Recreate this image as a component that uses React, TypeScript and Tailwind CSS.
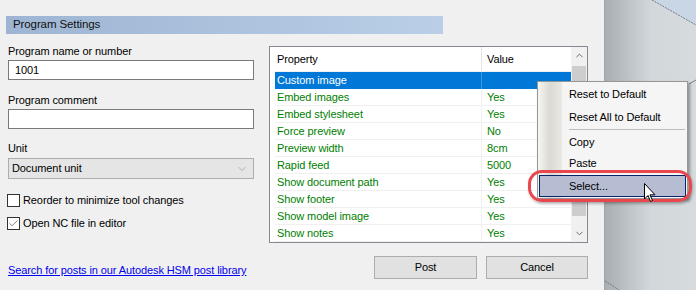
import { Check, ChevronDown, ChevronUp } from "lucide-react";

const font = { fontFamily: '"Liberation Sans", Arial, sans-serif' };

const rows = [
    { name: "Custom image", value: "" },
    { name: "Embed images", value: "Yes" },
    { name: "Embed stylesheet", value: "Yes" },
    { name: "Force preview", value: "No" },
    { name: "Preview width", value: "8cm" },
    { name: "Rapid feed", value: "5000" },
    { name: "Show document path", value: "Yes" },
    { name: "Show footer", value: "Yes" },
    { name: "Show model image", value: "Yes" },
    { name: "Show notes", value: "Yes" },
];

function Label({ text, className }: { text: string; className: string }) {
    return <div className={`h-[15px] leading-[15px] text-[#000] ${className}`}>{text}</div>;
}

export default function App() {
    return (
        <div
            style={font}
            className="relative flex h-[290px] w-[696px] overflow-hidden text-[11px] tracking-[-0.1px] text-black"
        >
            {/* ── Dialog ── */}
            <div className="h-full w-[605px] shrink-0 border-r border-[#a2a4a6] bg-[#f0f0f0] pl-[6px] pt-[16px]">
                {/* Section band */}
                <div className="flex h-[18px] w-[437px] items-center bg-gradient-to-r from-[#9db5d3] to-[#bacfe7] pl-[7px] text-[11.5px] text-[#111]">
                    Program Settings
                </div>

                <div className="flex">
                    {/* Left column */}
                    <div className="ml-[2px] flex w-[246px] flex-col">
                        <Label text="Program name or number" className="mt-[10px]" />
                        <div className="mt-[1px] flex h-[20px] items-center border border-[#7a7a7a] bg-white pl-[6px]">
                            1001
                        </div>

                        <Label text="Program comment" className="mt-[13px]" />
                        <div className="mt-[1px] h-[20px] border border-[#7a7a7a] bg-white" />

                        <Label text="Unit" className="mt-[12px]" />
                        <div className="mt-[2px] flex h-[21px] items-center justify-between border border-[#adadad] bg-[#e5e5e5] pl-[3px] pr-[5px] text-black">
                            <span>Document unit</span>
                            <ChevronDown className="h-[12px] w-[12px] text-[#8a8a8a]" strokeWidth={1.2} />
                        </div>

                        <div className="mt-[15px] flex h-[13px] items-center">
                            <div className="h-[13px] w-[13px] -ml-[1px] border border-[#333] bg-white" />
                            <span className="ml-[3px]">Reorder to minimize tool changes</span>
                        </div>
                        <div className="mt-[10px] flex h-[13px] items-center">
                            <div className="flex h-[13px] w-[13px] -ml-[1px] items-center justify-center border border-[#333] bg-white">
                                <Check className="h-[11px] w-[11px] text-[#555]" strokeWidth={1.6} />
                            </div>
                            <span className="ml-[3px]">Open NC file in editor</span>
                        </div>

                        <a className="mt-[33px] h-[15px] leading-[15px] text-[#0000ee] underline">
                            Search for posts in our Autodesk HSM post library
                        </a>
                    </div>

                    {/* Right column: property grid */}
                    <div className="ml-[15px] mt-[12px] flex w-[319px] flex-col">
                        <div className="flex h-[197px] border border-[#828790] bg-white">
                            <div className="flex flex-1 flex-col pl-[5px]">
                                <div className="flex h-[25px] border-b border-[#f0f0f0]">
                                    <div className="flex w-[206px] items-center pl-[2px]">Property</div>
                                    <div className="w-px bg-[#e5e5e5]" />
                                    <div className="flex flex-1 items-center pl-[5px]">Value</div>
                                </div>
                                {rows.map((r, i) => {
                                    const sel = i === 0;
                                    return (
                                        <div
                                            key={r.name}
                                            className={`flex h-[17px] ${sel ? "bg-[#0078d7] text-white" : "border-b border-[#f0f0f0] text-[#008000]"}`}
                                        >
                                            <div className="flex w-[206px] items-center pl-[2px]">{r.name}</div>
                                            <div className={`w-px ${sel ? "bg-[#3d97df]" : "bg-[#f0f0f0]"}`} />
                                            <div className="flex flex-1 items-center pl-[5px]">{r.value}</div>
                                        </div>
                                    );
                                })}
                            </div>
                            {/* Scrollbar */}
                            <div className="flex w-[16px] flex-col items-center bg-[#f0f0f0]">
                                <div className="flex h-[17px] items-center justify-center">
                                    <ChevronUp className="h-[11px] w-[11px] text-[#606060]" strokeWidth={2} />
                                </div>
                                <div className="mt-[2px] h-[150px] w-[14px] bg-[#cdcdcd]" />
                                <div className="flex-1" />
                                <div className="flex h-[17px] items-center justify-center">
                                    <ChevronDown className="h-[11px] w-[11px] text-[#606060]" strokeWidth={2} />
                                </div>
                            </div>
                        </div>

                        <div className="mt-[13px] flex justify-end gap-[9px]">
                            <div className="flex h-[23px] w-[103px] items-center justify-center border border-[#adadad] bg-[#e1e1e1]">
                                Post
                            </div>
                            <div className="flex h-[23px] w-[102px] items-center justify-center border border-[#adadad] bg-[#e1e1e1]">
                                Cancel
                            </div>
                        </div>
                    </div>
                </div>
            </div>

            {/* ── Model viewport behind ── */}
            <div className="relative flex-1 bg-gradient-to-r from-[#a9aeb2] via-[#d2d7db] to-[#d6dbde]">
                <svg className="absolute inset-0 h-full w-full" viewBox="0 0 91 290" preserveAspectRatio="none">
                    <polygon points="47,0 91,0 91,25" fill="#c9d6e6" />
                    <line x1="47" y1="0" x2="91" y2="25" stroke="#5d6770" strokeWidth="0.8" strokeDasharray="2 1" />
                    <line x1="0" y1="281" x2="14" y2="290" stroke="#5d6770" strokeWidth="0.8" strokeDasharray="2 1" />
                    <line x1="84" y1="84" x2="91" y2="80" stroke="#5d6770" strokeWidth="0.8" />
                </svg>
            </div>

            {/* ── Context menu ── */}
            <div className="absolute left-[537px] top-[81px] flex h-[118px] w-[151px] border border-[#979797] bg-[#f5f5f5] shadow-[2px_2px_3px_rgba(0,0,0,0.35)]">
                <div className="w-[24px] bg-gradient-to-r from-[#f6f5f1] via-[#dcdad3] to-[#eae8e3]" />
                <div className="flex flex-1 flex-col pt-[1px]">
                    <div className="flex h-[23px] items-center pl-[7px]">Reset to Default</div>
                    <div className="flex h-[22px] items-center pl-[7px]">Reset All to Default</div>
                    <div className="my-[1px] ml-[7px] mr-[2px] h-px bg-[#bdbdbd]" />
                    <div className="flex h-[22px] items-center pl-[7px]">Copy</div>
                    <div className="flex h-[21px] items-center pl-[7px]">Paste</div>
                </div>
            </div>
            <div className="absolute left-[539px] top-[175px] flex h-[22px] w-[147px] items-center border border-[#0a246a] bg-[#b6bdd2] pl-[29px]">
                Select...
            </div>

            {/* ── Highlight ring ── */}
            <div className="absolute left-[528px] top-[170px] h-[32px] w-[164px] rounded-[14px] border-[3px] border-[#e8484d] shadow-[1px_2px_3px_rgba(0,0,0,0.25)]" />

            {/* ── Cursor ── */}
            <svg className="absolute left-[644px] top-[183px]" width="13" height="20" viewBox="0 0 13 20">
                <path
                    d="M0.5 0.5 L0.5 16 L4 12.5 L6.5 18.5 L8.5 17.5 L6 11.8 L11 11.8 Z"
                    fill="white"
                    stroke="black"
                    strokeWidth="1"
                    strokeLinejoin="round"
                />
            </svg>
        </div>
    );
}
